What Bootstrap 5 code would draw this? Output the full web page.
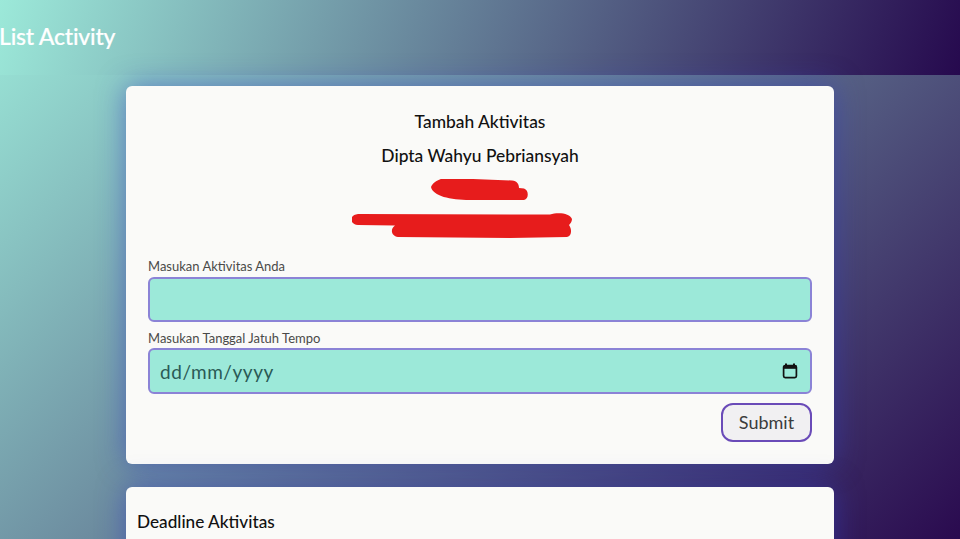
<!DOCTYPE html>
<html lang="id">
<head>
<meta charset="utf-8">
<title>List Activity</title>
<link href="https://cdn.jsdelivr.net/npm/bootstrap@5.3.0/dist/css/bootstrap.min.css" rel="stylesheet">
<style>
html,body{height:100%;overflow:hidden}
body{background:linear-gradient(135deg,#9ce9d9 0%,#2a0a4f 100%);font-family:Lato,"Open Sans",sans-serif;color:#111}
.top-bar{height:75px;padding-bottom:3px;background:linear-gradient(110deg,#9ce9d9 0%,#26094e 100%);color:#fff;font-size:23px;font-weight:500;letter-spacing:-.2px;text-indent:-1px;-webkit-text-stroke:.2px #fff}
.panel-w{width:708px;margin-left:126px}
.panel{background:#fafaf8;border-radius:6px;box-shadow:0 0 28px rgba(50,60,190,.55)}
.panel-main{height:378px;margin-top:11px;padding:25px 22px 22px}
.panel-next{margin-top:23px;height:100px;padding:23px 11px}
.ttl{font-size:17.4px;line-height:22px;text-align:center;margin:0 0 12px;font-weight:500}
.ttl-left{font-size:17.2px;line-height:24px;margin:0;font-weight:500}
.scrib{display:block;margin:0 auto}
.lbl{font-size:13px;line-height:16px;margin:8px 0 0;color:#4a4a48;display:block}
.lbl-a{padding-bottom:3px}
.lbl-b{padding-bottom:2px}
.field{background:#9ce9d9;border:2px solid #8b83d6;border-radius:6px;width:100%;display:block;font-size:19px;color:#2a5a55;padding:0 10px;font-family:inherit;letter-spacing:.55px}
.field:focus{outline:0}
.f1{height:45px}
.f2{height:46px}
.cal-ico{position:absolute;right:14px;top:15px}
.sub-btn{width:91px;height:39px;border:2px solid #6a4bb8;border-radius:12px;background:#f1f0f2;color:#3c3c3c;font-size:18px;padding:0}
.btn-row{margin-top:9px}
</style>
</head>
<body>
<header class="top-bar d-flex align-items-center">List Activity</header>
<main class="panel-w">
<section class="panel panel-main d-flex flex-column">
<p class="ttl">Tambah Aktivitas</p>
<p class="ttl">Dipta Wahyu Pebriansyah</p>
<svg class="scrib flex-shrink-0" width="256" height="71" viewBox="352 179 256 71" fill="#e71c1c">
<path d="M431 187C433 182 440 178 447 178L512 180.500C517 181 519 184 519 188L524 188.500C529 190 529 199 524 200L470 200C450 200 433 196 431 187Z"/>
<path d="M358 214L550 214.500C558 212 570 213 572 219C572 222 570 224 569 225C572 229 572 236 567 237L510 238L398 237C391 236 390 229 395 225.500L358 225C349 224 349 215 358 214Z"/>
</svg>
<label class="lbl lbl-a" for="a1">Masukan Aktivitas Anda</label>
<input id="a1" class="field f1" type="text">
<label class="lbl lbl-b" for="a2">Masukan Tanggal Jatuh Tempo</label>
<div class="position-relative">
<input id="a2" class="field f2" type="text" value="dd/mm/yyyy">
<svg class="cal-ico" width="16" height="16" viewBox="0 0 16 16" fill="none"><path d="M4 .5V3M12 .5V3" stroke="#111" stroke-width="2"/><rect x="1.6" y="2.6" width="12.8" height="12" rx="1.6" stroke="#111" stroke-width="1.7"/><rect x="1.6" y="2.6" width="12.8" height="3.2" fill="#111"/></svg>
</div>
<div class="d-flex justify-content-end btn-row"><button class="sub-btn" type="button">Submit</button></div>
</section>
<section class="panel panel-next"><h2 class="ttl-left">Deadline Aktivitas</h2></section>
</main>
<script src="https://cdn.jsdelivr.net/npm/bootstrap@5.3.0/dist/js/bootstrap.bundle.min.js"></script>
</body>
</html>
